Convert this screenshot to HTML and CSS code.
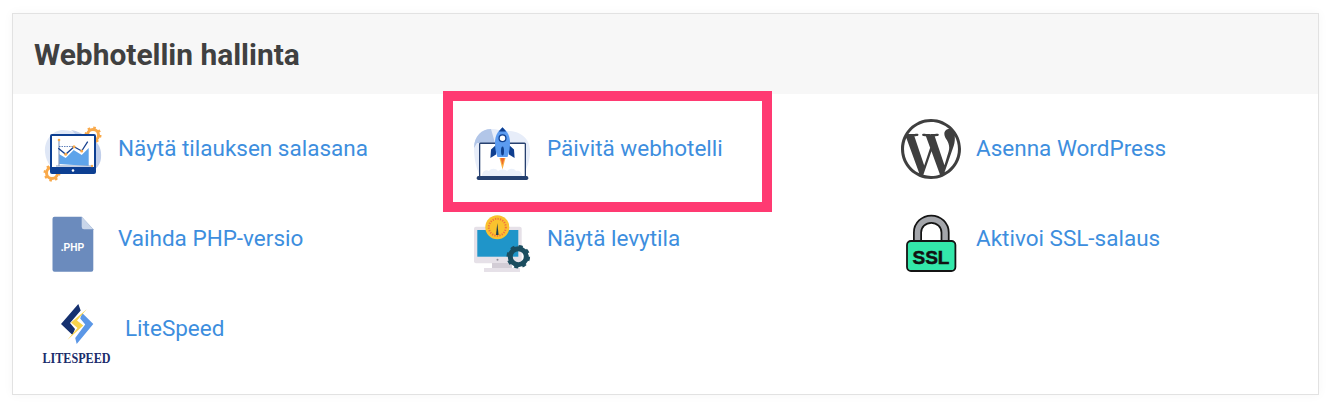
FILE: index.html
```html
<!DOCTYPE html>
<html lang="fi">
<head>
<meta charset="utf-8">
<title>Webhotellin hallinta</title>
<link rel="stylesheet" href="styles.css">
</head>
<body>
<section class="card">
  <header class="card-head"><h2 class="card-title">Webhotellin hallinta</h2></header>
  <div class="card-body">
    <a class="item" href="#">
      <svg class="icon" viewBox="0 0 60 60" aria-hidden="true">
        <path d="M2 34C1 22 10 12 20 12c8 0 12 3 18 4 10 2 21 8 20 24-1 10-9 15-17 15-6 0-10 2-18 0C10 53 3 46 2 34Z" fill="#dfe7f6"/>
        <path d="M28 12c8 1 12 5 20 8 8 4 11 12 10 20-1 9-8 14-15 15-4-10 2-30-15-43Z" fill="#b5c6e6" opacity=".75"/>
        <g fill="none" stroke="#f9a94a" stroke-width="3">
          <circle cx="50" cy="17" r="5.5"/><circle cx="50" cy="17" r="7" stroke-dasharray="2.4 3.1"/>
          <circle cx="9" cy="55" r="5.5"/><circle cx="9" cy="55" r="7" stroke-dasharray="2.4 3.1"/>
        </g>
        <rect x="7" y="16" width="46" height="40" rx="2" fill="#0d3f92"/>
        <rect x="9" y="18" width="42" height="31" fill="#fff"/>
        <circle cx="30" cy="52.500" r="1.300" fill="#fff"/>
        <path d="M16 46V36l6.700 4 8-8 8 5 7-7v18Z" fill="#5ea4ea"/>
        <path d="M16 22v26M13 48h36" stroke="#8a9fc4" stroke-width="1.200" fill="none"/>
        <path d="M16 28.500h15" stroke="#1d4c9d" stroke-width=".7" stroke-dasharray="1.500 1"/>
        <path d="M15.300 30.300l7.400 6 8.300-7.600 7.700 4.300 6-9.300" stroke="#16408f" stroke-width="1.300" fill="none"/>
        <g fill="#f9a94a"><circle cx="22.700" cy="36.300" r="1.500"/><circle cx="31" cy="28.700" r="1.500"/><circle cx="38.700" cy="33" r="1.500"/><circle cx="16" cy="22" r="1.300"/><circle cx="49" cy="48" r="1.200"/></g>
      </svg>
      <span class="label">Näytä tilauksen salasana</span>
    </a>
    <a class="item" href="#">
      <svg class="icon" viewBox="0 0 60 60" aria-hidden="true">
        <path d="M2 30C2 18 10 11 19 11c7 0 10 2 17 2 12 0 22 7 22 20 0 10-3 18-8 25H8C4 50 2 40 2 30Z" fill="#e7edf9"/>
        <path d="M2 30C2 18 10 11 19 11l4 14H5Z" fill="#b2c6e8"/>
        <rect x="7" y="24.500" width="47" height="34.500" rx="1.500" fill="#27406f"/>
        <rect x="8.300" y="26" width="44.400" height="32" fill="#fff"/>
        <path d="M10 58c0-5 4-7 7-5 2-3 7-3 9 0 3-2 7-2 9 0 3-3 7-3 9 0 3-1 6 1 6 5Z" fill="#eaf0fa"/>
        <rect x="4.700" y="58" width="51.600" height="4" rx="1.800" fill="#25406f"/>
        <path d="M27.500 40h6l-3 11.500Z" fill="#fbb040"/>
        <path d="M28.500 40h4l-2 7Z" fill="#ee6a2c"/>
        <path d="M24 27l-5 4.500-.6 8.500 5.600-3.500ZM37 27l5 4.500.6 8.500-5.600-3.500Z" fill="#0f3f8f"/>
        <path d="M30.500 9.500c5 3.500 7.500 9 7.500 15 0 6-1 11-2.500 14.500h-10C24 35.500 23 30.500 23 24.500c0-6 2.500-11.500 7.500-15Z" fill="#5b9bf0"/>
        <path d="M30.500 9.300l3.600 4.200h-7.200Z" fill="#0f3f8f"/>
        <circle cx="30.500" cy="20.300" r="3.400" fill="#fff" stroke="#0f3f8f" stroke-width="1.300"/>
        <ellipse cx="30.500" cy="33" rx="1.500" ry="4.500" fill="#0f3f8f"/>
      </svg>
      <span class="label">Päivitä webhotelli</span>
    </a>
    <a class="item" href="#">
      <svg class="icon" viewBox="0 0 60 60" aria-hidden="true">
        <path transform="translate(0 1) scale(2.500)" fill="#3f3f3f" d="M21.469 6.825c.84 1.537 1.318 3.3 1.318 5.175 0 3.979-2.156 7.456-5.363 9.325l3.295-9.527c.615-1.54.82-2.771.82-3.864 0-.405-.026-.78-.07-1.11m-7.981.105c.647-.03 1.232-.105 1.232-.105.582-.075.514-.93-.067-.899 0 0-1.755.135-2.88.135-1.064 0-2.85-.15-2.85-.15-.585-.03-.661.855-.075.885 0 0 .54.061 1.125.09l1.68 4.605-2.37 7.08L5.354 6.9c.649-.03 1.234-.1 1.234-.1.585-.075.516-.93-.065-.896 0 0-1.746.138-2.874.138-.2 0-.438-.008-.69-.015C4.911 3.15 8.235 1.215 12 1.215c2.809 0 5.365 1.072 7.286 2.833-.046-.003-.091-.009-.141-.009-1.06 0-1.812.923-1.812 1.914 0 .89.513 1.643 1.06 2.531.411.72.89 1.643.89 2.977 0 .915-.354 1.994-.821 3.479l-1.075 3.585-3.9-11.61.001.014zM12 22.784c-1.059 0-2.081-.153-3.048-.437l3.237-9.406 3.315 9.087c.024.053.05.101.078.149-1.12.393-2.325.609-3.582.609M1.211 12c0-1.564.336-3.05.935-4.39L7.29 21.709C3.694 19.96 1.212 16.271 1.211 12M12 0C5.385 0 0 5.385 0 12s5.385 12 12 12 12-5.385 12-12S18.615 0 12 0"/>
      </svg>
      <span class="label">Asenna WordPress</span>
    </a>
    <a class="item" href="#">
      <svg class="icon" viewBox="0 0 60 60" aria-hidden="true">
        <path d="M11.500 8.700h27.200l11.600 12.600v40.400a2 2 0 0 1-2 2H11.500a2 2 0 0 1-2-2V10.700a2 2 0 0 1 2-2Z" fill="#6b8bbd"/>
        <path d="M38.700 8.700l11.600 12.600H41a2.300 2.300 0 0 1-2.300-2.300Z" fill="#c9d6ea"/>
        <text class="php-text" x="29.500" y="42.500">.PHP</text>
      </svg>
      <span class="label">Vaihda PHP-versio</span>
    </a>
    <a class="item" href="#">
      <svg class="icon" viewBox="0 0 60 60" aria-hidden="true">
        <rect x="2" y="18.700" width="47.700" height="36.600" rx="2" fill="#e6e1e8"/>
        <rect x="5.300" y="22" width="41" height="26.700" fill="#1f95c9"/>
        <rect x="20" y="55" width="20" height="5" fill="#d3cdd6"/>
        <rect x="12" y="60" width="36" height="4" fill="#e6e1e8"/>
        <circle cx="25.500" cy="51.700" r="1" fill="#8d8a96"/>
        <circle cx="25.300" cy="19.300" r="12" fill="#fac22e"/>
        <circle cx="25.300" cy="19.300" r="8.500" fill="none" stroke="#f0703f" stroke-width="2" stroke-dasharray="1.200 1.300"/>
        <path d="M24 27l1.300-12 1.300 12Z" fill="#1c3f50"/>
        <circle cx="46.300" cy="48.700" r="8" fill="none" stroke="#1b4d5f" stroke-width="5"/>
        <circle cx="46.300" cy="48.700" r="10.300" fill="none" stroke="#1b4d5f" stroke-width="3" stroke-dasharray="4 4.090"/>
      </svg>
      <span class="label">Näytä levytila</span>
    </a>
    <a class="item" href="#">
      <svg class="icon" viewBox="0 0 60 60" aria-hidden="true">
        <path d="M16.500 34V24.500a13.800 13.300 0 0 1 27.600 0V34" fill="none" stroke="#141414" stroke-width="9"/>
        <path d="M16.500 34V24.500a13.800 13.300 0 0 1 27.600 0V34" fill="none" stroke="#a4a6ab" stroke-width="5.500"/>
        <rect x="6" y="33" width="48.400" height="30" rx="4" fill="#33e8aa" stroke="#141414" stroke-width="1.800"/>
        <text class="ssl-text" x="30" y="55.500">SSL</text>
      </svg>
      <span class="label">Aktivoi SSL-salaus</span>
    </a>
    <a class="item" href="#">
      <svg class="icon icon-wide" viewBox="0 0 67 60" aria-hidden="true">
        <path d="M18 26L35.300 6l2.400 6.500L27 25l5 6-2.500 6Z" fill="#15306f"/>
        <path d="M50.300 26L33.700 46l-1.500-6 10-13.500-5-6 2-5.500Z" fill="#5b97e6"/>
        <path d="M43.700 11.300L28 24.500l6.500 5.500L24.300 42l16-14.500-6.300-5Z" fill="#f8d44c"/>
        <text class="ls-text" x="33.500" y="65" textLength="68" lengthAdjust="spacingAndGlyphs">LITESPEED</text>
      </svg>
      <span class="label">LiteSpeed</span>
    </a>
  </div>
  <div class="highlight"></div>
</section>
</body>
</html>
```
FILE: styles.css
```css
* { box-sizing: border-box; }
html, body { margin: 0; background: #fff; }
body { padding: 13px 15px 8px 12px; font-family: Roboto, "Liberation Sans", sans-serif; }
.card {
  position: relative;
  height: 382px;
  background: #fff;
  border: 1px solid #e2e2e2;
  box-shadow: 0 0 10px rgba(0, 0, 0, .04);
}
.card-head {
  height: 80px;
  background: #f7f7f7;
  padding: 0 21px;
  display: flex;
  align-items: center;
}
.card-title {
  margin: 0;
  font-size: 29.900px;
  font-weight: 700;
  color: #404040;
}
.card-body {
  display: grid;
  grid-template-columns: repeat(3, 429px);
  grid-auto-rows: 90px;
  padding: 9px 0 0 30px;
}
.item {
  display: flex;
  align-items: center;
  gap: 15px;
  text-decoration: none;
  color: #3d8ede;
  align-self: stretch;
}
.icon { width: 60px; height: 60px; flex: none; overflow: visible; }
.icon-wide { width: 67px; }
.label { font-size: 22.500px; }
.php-text { font: 700 10px "Liberation Sans", sans-serif; fill: #fff; text-anchor: middle; }
.ssl-text { font: 700 19px "Liberation Sans", sans-serif; fill: #111; stroke: #111; stroke-width: .5px; text-anchor: middle; }
.ls-text { font: 700 15px "Liberation Serif", serif; fill: #1a2c6b; text-anchor: middle; }
.highlight {
  position: absolute;
  left: 430px;
  top: 77px;
  width: 329px;
  height: 121px;
  border: 10px solid #ff3a72;
}
```
